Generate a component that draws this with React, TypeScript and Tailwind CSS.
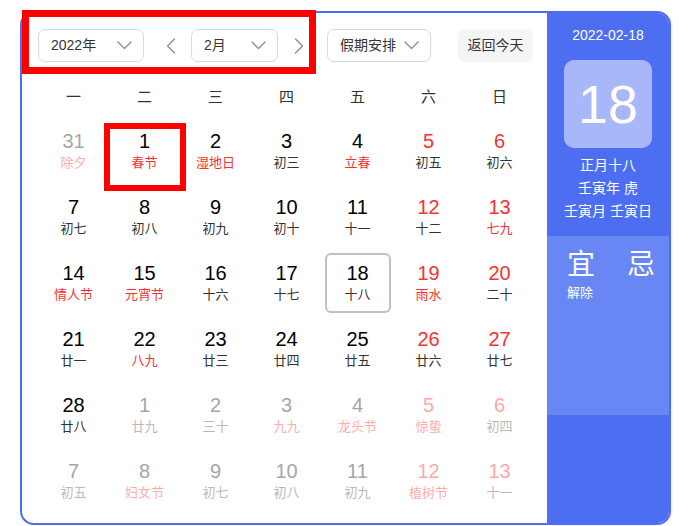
import React from "react";

type Tone = "n" | "r" | "f" | "fr";
type Day = { d: number; l: string; nt: Tone; lt: Tone; today?: boolean };

const D = (d: number, l: string, nt: Tone = "n", lt: Tone = "n", today = false): Day => ({ d, l, nt, lt, today });

const rows: Day[][] = [
  [D(31, "除夕", "f", "fr"), D(1, "春节", "n", "r"), D(2, "湿地日", "n", "r"), D(3, "初三"), D(4, "立春", "n", "r"), D(5, "初五", "r"), D(6, "初六", "r")],
  [D(7, "初七"), D(8, "初八"), D(9, "初九"), D(10, "初十"), D(11, "十一"), D(12, "十二", "r"), D(13, "七九", "r", "r")],
  [D(14, "情人节", "n", "r"), D(15, "元宵节", "n", "r"), D(16, "十六"), D(17, "十七"), D(18, "十八", "n", "n", true), D(19, "雨水", "r", "r"), D(20, "二十", "r")],
  [D(21, "廿一"), D(22, "八九", "n", "r"), D(23, "廿三"), D(24, "廿四"), D(25, "廿五"), D(26, "廿六", "r"), D(27, "廿七", "r")],
  [D(28, "廿八"), D(1, "廿九", "f", "f"), D(2, "三十", "f", "f"), D(3, "九九", "f", "fr"), D(4, "龙头节", "f", "fr"), D(5, "惊蛰", "fr", "fr"), D(6, "初四", "fr", "f")],
  [D(7, "初五", "f", "f"), D(8, "妇女节", "f", "fr"), D(9, "初七", "f", "f"), D(10, "初八", "f", "f"), D(11, "初九", "f", "f"), D(12, "植树节", "fr", "fr"), D(13, "十一", "fr", "f")],
];

const numCls: Record<Tone, string> = {
  n: "text-[#000000]",
  r: "text-[#F73131]",
  f: "text-[#a6a6a6]",
  fr: "text-[#ffa8a8]",
};
const lunCls: Record<Tone, string> = {
  n: "text-[#333333]",
  r: "text-[#F73131]",
  f: "text-[#b8b8b8]",
  fr: "text-[#ffadad]",
};

const ChevronDown = () => (
  <svg width="15" height="9" viewBox="0 0 15 9" fill="none">
    <path d="M1 1l6.5 6.5L14 1" stroke="#8a8e99" strokeWidth="1.4" strokeLinecap="round" strokeLinejoin="round" />
  </svg>
);

const ChevronSide = ({ dir }: { dir: "l" | "r" }) => (
  <svg width="10" height="16" viewBox="0 0 10 16" fill="none">
    <path
      d={dir === "l" ? "M8.5 1L1.5 8l7 7" : "M1.5 1l7 7-7 7"}
      stroke="#8a8e99"
      strokeWidth="1.4"
      strokeLinecap="round"
      strokeLinejoin="round"
    />
  </svg>
);

const Select = ({ label, w }: { label: string; w: string }) => (
  <div className={`${w} h-[33px] flex items-center justify-between pl-[12px] pr-[11px] border border-[#d7d9e0] rounded-[7px] text-[14px] text-[#333]`}>
    <span>{label}</span>
    <ChevronDown />
  </div>
);

export default function App() {
  const font = { fontFamily: '"Liberation Sans", Arial, "Noto Sans CJK SC", sans-serif' };
  return (
    <div className="relative w-[679px] h-[526px] bg-white overflow-hidden" style={font}>
      <div className="absolute left-[20px] top-[11px] w-[651px] h-[514px] border-2 border-[#4E6EF2] rounded-[14px] overflow-hidden flex bg-white shadow-[1px_0_2px_rgba(0,0,0,0.08)]">
        {/* left */}
        <div className="w-[525px] shrink-0 flex flex-col">
          <div className="flex items-center pl-[16px] pt-[16px]">
            <Select label="2022年" w="w-[106px]" />
            <div className="ml-[22px] mr-[15px] flex items-center">
              <ChevronSide dir="l" />
            </div>
            <Select label="2月" w="w-[87px]" />
            <div className="ml-[16px] mr-[23px] flex items-center">
              <ChevronSide dir="r" />
            </div>
            <Select label="假期安排" w="w-[104px]" />
            <div className="ml-[27px] w-[75px] h-[33px] rounded-[7px] bg-[#f5f5f6] flex items-center justify-center text-[14px] text-[#333]">
              返回今天
            </div>
          </div>

          <div className="grid grid-cols-7 w-[497px] ml-[16px] mt-[20px] h-[30px] items-center text-[15px] text-[#333]">
            {["一", "二", "三", "四", "五", "六", "日"].map((w) => (
              <div key={w} className="text-center">{w}</div>
            ))}
          </div>

          <div className="grid grid-cols-7 w-[497px] ml-[16px] mt-[9px] gap-y-[6px]">
            {rows.flat().map((c, i) => (
              <div key={i} className="flex justify-center">
                <div
                  className={`w-[66px] h-[60px] flex flex-col items-center pt-[7px] rounded-[6px] ${
                    c.today ? "border-2 border-[#bfc1ca]" : "border-2 border-transparent"
                  }`}
                >
                  <div className={`text-[20px] leading-[22px] h-[22px] ${numCls[c.nt]}`}>{c.d}</div>
                  <div className={`mt-[3px] text-[13px] leading-[16px] ${lunCls[c.lt]}`}>{c.l}</div>
                </div>
              </div>
            ))}
          </div>
        </div>

        {/* right panel */}
        <div className="w-[122px] shrink-0 bg-[#4E6EF2] flex flex-col items-center text-white">
          <div className="pt-[12px] text-[14px] leading-[20px]">2022-02-18</div>
          <div className="mt-[15px] w-[88px] h-[88px] rounded-[10px] bg-[#a7b7f9] flex items-center justify-center text-[54px] leading-none">
            18
          </div>
          <div className="mt-[6px] flex flex-col items-center text-[14px] leading-[23px]">
            <div>正月十八</div>
            <div>壬寅年 虎</div>
            <div>壬寅月 壬寅日</div>
          </div>
          <div className="mt-[13px] w-full h-[179px] bg-[#6886F4] flex pl-[20px] pt-[13px]">
            <div className="w-[60px] flex flex-col">
              <div className="text-[28px] leading-[32px]">宜</div>
              <div className="mt-[3px] text-[13px] leading-[18px]">解除</div>
            </div>
            <div className="flex flex-col">
              <div className="text-[28px] leading-[32px]">忌</div>
            </div>
          </div>
        </div>
      </div>

      {/* annotation boxes */}
      <div className="absolute left-[22px] top-[10px] w-[294px] h-[64px] border-[7px] border-[#ff0000]" />
      <div className="absolute left-[104px] top-[123px] w-[82px] h-[68px] border-[6px] border-[#ff0000]" />
    </div>
  );
}
